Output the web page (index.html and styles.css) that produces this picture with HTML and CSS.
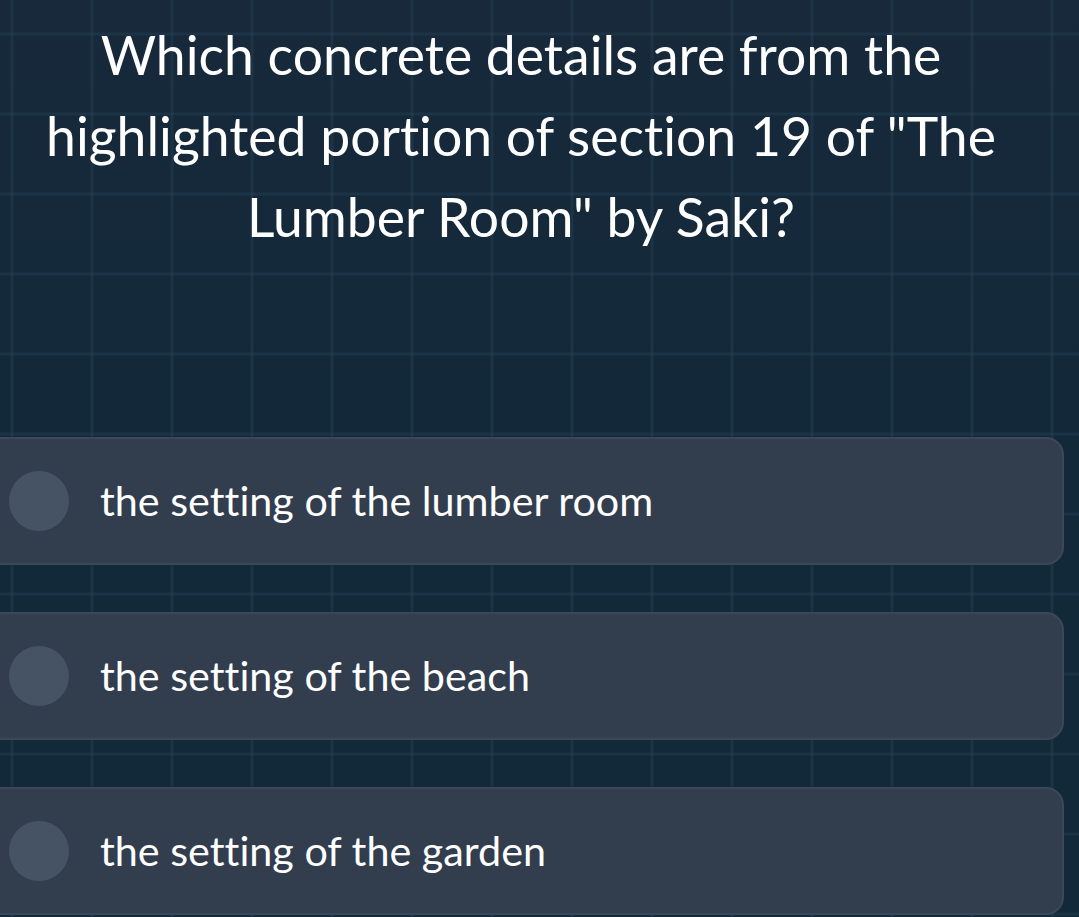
FILE: index.html
```html
<!DOCTYPE html>
<html lang="en">
<head>
    <meta charset="UTF-8">
    <meta name="viewport" content="width=device-width, initial-scale=1.0">
    <title>Question</title>
    <link rel="stylesheet" href="styles.css">
</head>
<body>
    <div class="quiz">
        <h1 class="question">Which concrete details are from the highlighted portion of section 19 of "The Lumber Room" by Saki?</h1>

        <div class="options">
            <div class="option">
                <span class="radio"></span>
                <span class="option-text">the setting of the lumber room</span>
            </div>
            <div class="option">
                <span class="radio"></span>
                <span class="option-text">the setting of the beach</span>
            </div>
            <div class="option">
                <span class="radio"></span>
                <span class="option-text">the setting of the garden</span>
            </div>
        </div>
    </div>
</body>
</html>
```

FILE: styles.css
```css
* {
    margin: 0;
    padding: 0;
    box-sizing: border-box;
}

:root {
    --bg: #13293a;
    --grid-color: rgba(42, 74, 94, 0.32);
    --card: #323d4e;
    --card-border: #3c4859;
    --radio: #465364;
    --text: #ffffff;
}

html,
body {
    height: 100%;
}

body {
    font-family: 'Lato', 'Liberation Sans', sans-serif;
    font-variant-ligatures: no-common-ligatures;
    color: var(--text);
    overflow: hidden;
    background-color: var(--bg);
    /* blueprint grid */
    background-image:
        linear-gradient(to right, transparent 0, var(--grid-color) 1px, var(--grid-color) 3px, transparent 4px),
        linear-gradient(to bottom, transparent 0, var(--grid-color) 1px, var(--grid-color) 3px, transparent 4px),
        linear-gradient(180deg, #17293a 0%, #13293a 40%, #112938 100%);
    background-size: 80px 80px, 80px 80px, 100% 100%;
    background-position: 10px 32px, 10px 32px, 0 0;
}

.quiz {
    width: 1086px;
    margin-left: -22px;
    padding-top: 14px;
}

.question {
    font-size: 53.5px;
    font-weight: 400;
    line-height: 81px;
    text-align: center;
    padding: 0 40px;
}

.options {
    margin-top: 180px;
    display: flex;
    flex-direction: column;
    gap: 47px;
}

.option {
    height: 128px;
    display: flex;
    align-items: center;
    gap: 31px;
    padding-left: 29px;
    background: var(--card);
    border: 2px solid var(--card-border);
    border-radius: 18px;
}

.radio {
    width: 60px;
    height: 60px;
    flex-shrink: 0;
    border-radius: 50%;
    background: var(--radio);
}

.option-text {
    font-size: 41.3px;
    line-height: 1.2;
}
```
